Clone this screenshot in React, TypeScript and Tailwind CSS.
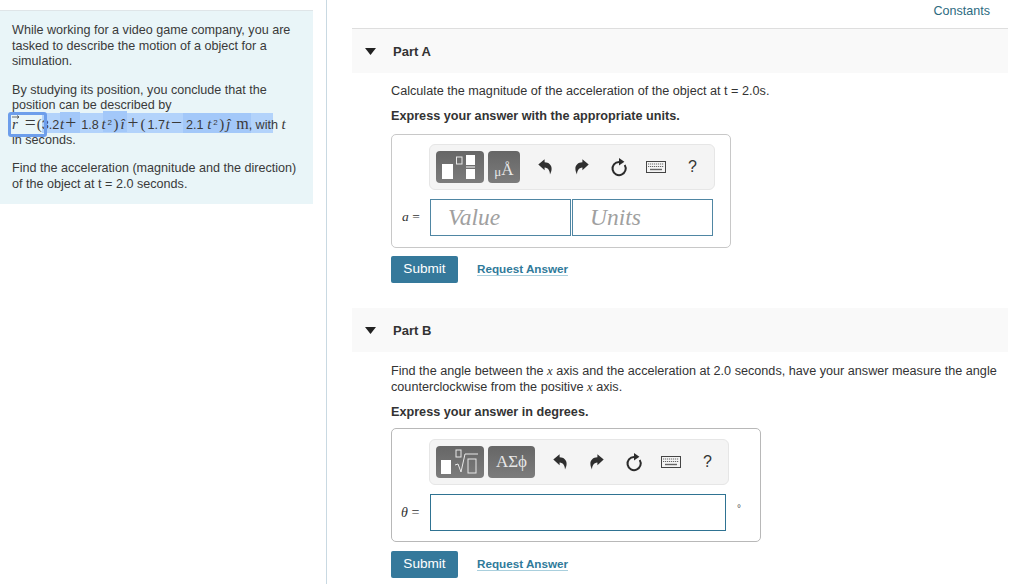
import React from 'react';

const sans = { fontFamily: '"Liberation Sans", Arial, sans-serif' };

function UndoIcon({ flip }: { flip?: boolean }) {
  return (
    <svg width="14" height="16" viewBox="0 0 14 16" className={flip ? '-scale-x-100' : ''}>
      <path d="M0.3 5.6 L6.6 0.3 L6.6 3.2 C10.8 3.2 13.8 6 13.6 10 C13.5 12 12.9 13.7 12 15.4 C11.8 12 10.4 8.8 6.6 8.6 L6.6 11.2 Z" fill="#2f2f2f" />
    </svg>
  );
}

function ResetIcon() {
  return (
    <svg width="18" height="19" viewBox="0 0 18 19">
      <path d="M9 3.9 A6.6 6.6 0 1 0 14.7 7" fill="none" stroke="#2b2b2b" strokeWidth="2" />
      <path d="M9 0 L9 7.6 L14.4 3.8 Z" fill="#2b2b2b" />
    </svg>
  );
}

function KeyboardIcon() {
  return (
    <svg width="20" height="12" viewBox="0 0 20 12">
      <rect x="0.5" y="0.5" width="19" height="11" fill="#f4f4f4" stroke="#444" />
      <path d="M2 3 H18 M2 5.5 H18" stroke="#666" strokeWidth="1.2" strokeDasharray="1.2 0.8" />
      <path d="M4 8.5 H16" stroke="#666" strokeWidth="1.4" />
    </svg>
  );
}

function FractionGlyph() {
  return (
    <svg width="36" height="26" viewBox="0 0 36 26">
      <rect x="0" y="10" width="11" height="15" fill="#fff" />
      <rect x="14.5" y="3" width="5.5" height="7" fill="none" stroke="#e8e8e8" />
      <rect x="24" y="1" width="9" height="10" fill="#fff" />
      <rect x="24" y="12.5" width="9" height="1" fill="#fff" />
      <rect x="24" y="15" width="9" height="10" fill="#fff" />
    </svg>
  );
}

function RootGlyph() {
  return (
    <svg width="38" height="26" viewBox="0 0 38 26">
      <rect x="0" y="11" width="10" height="14" fill="#fff" />
      <rect x="15" y="1" width="5" height="7" fill="none" stroke="#e8e8e8" />
      <path d="M14 16 L17 15 L20 23 L24 5 L37 5" fill="none" stroke="#e8e8e8" strokeWidth="1" />
      <rect x="27" y="10" width="8" height="14" fill="none" stroke="#e8e8e8" />
    </svg>
  );
}

function Toolbar({ wide, offset }: { wide: number; offset: boolean }) {
  const slot = 'w-[37px] flex items-center justify-center';
  return (
    <div
      className="h-[46px] bg-[#f4f4f4] border border-[#e6e6e6] rounded-[6px] flex items-center pl-[6px]"
      style={{ width: wide }}
    >
      <div className="w-[48px] h-[32px] rounded-[4px] bg-gradient-to-b from-[#666666] to-[#7c7c7c] flex items-center justify-center">
        {offset ? <RootGlyph /> : <FractionGlyph />}
      </div>
      {offset ? (
        <div className="ml-[4px] w-[47px] h-[32px] rounded-[4px] bg-gradient-to-b from-[#666666] to-[#7c7c7c] flex items-center justify-center text-[#e8e8e8] text-[17px] font-['Liberation_Serif',serif]">
          ΑΣϕ
        </div>
      ) : (
        <div className="ml-[4px] w-[32px] h-[32px] rounded-[4px] bg-gradient-to-b from-[#666666] to-[#7c7c7c] flex items-end justify-center pb-[5px] text-[#e8e8e8] leading-none font-['Liberation_Serif',serif]">
          <span className="text-[13px]">μ</span>
          <span className="text-[17px]">Å</span>
        </div>
      )}
      <div className="ml-[6px] flex items-center">
        <div className={slot}><UndoIcon /></div>
        <div className={slot}><UndoIcon flip /></div>
        <div className={slot}><ResetIcon /></div>
        <div className={slot}><KeyboardIcon /></div>
        <div className={`${slot} text-[16px] text-[#333]`}>?</div>
      </div>
    </div>
  );
}

function Actions() {
  return (
    <div className="flex items-center mt-[8px]">
      <button className="w-[67px] h-[27px] rounded-[2px] bg-[#35799b] text-white text-[13.6px]">Submit</button>
      <a className="ml-[19px] text-[11.7px] font-bold text-[#2f7a9a] border-b border-[#a9cfdd] leading-[12px] -mt-[1px]">Request Answer</a>
    </div>
  );
}

function PartHeader({ label }: { label: string }) {
  return (
    <div className="h-[44px] bg-[#f9f9f9] flex items-center pl-[13px]">
      <svg width="11" height="7" viewBox="0 0 11 7">
        <path d="M0 0 H11 L5.5 7 Z" fill="#222" />
      </svg>
      <span className="ml-[17px] mt-[1px] text-[13px] font-bold text-[#333]">{label}</span>
    </div>
  );
}

const mathOp = "font-['Liberation_Serif',serif] text-[19.5px]";
const mathSerif = "font-['Liberation_Serif',serif] text-[15px]";
const mathVar = "font-['Liberation_Serif',serif] italic text-[15px]";

export default function App() {
  return (
    <div className="w-[1024px] h-[584px] overflow-hidden bg-white flex text-[#333]" style={sans}>
      {/* problem statement */}
      <aside className="w-[327px] shrink-0 h-full border-r border-[#c9d9e2] pt-[10px]">
        <div className="w-[313px] h-[194px] bg-[#e9f5f8] border-t border-[#dfe5e8] pl-[12px] pt-[12px] text-[12.6px] leading-[15.5px] text-[#3a3a3a]">
          <p>
            While working for a video game company, you are
            <br />
            tasked to describe the motion of a object for a
            <br />
            simulation.
          </p>
          <p className="mt-[13px]">
            By studying its position, you conclude that the
            <br />
            position can be described by
          </p>
          <p className="relative whitespace-nowrap h-[19px] leading-[18px]">
            {/* browser selection left over the formula */}
            <span className="absolute left-[30px] -top-[1px] w-[231px] h-[20px] bg-[#b3d3fb]" />
            <span className="absolute left-[48px] -top-[2px] w-[20px] h-[21px] bg-[#a3c8f9]" />
            <span className="absolute left-[91px] -top-[3px] w-[24px] h-[21px] bg-[#a3c8f9]" />
            <span className="absolute left-[171px] -top-[1px] w-[68px] h-[20px] bg-[#a3c8f9]" />
            <span className="relative">
              <span className={`${mathVar} relative`}>
                r
                <svg width="8" height="4" viewBox="0 0 8 4" className="absolute left-0 -top-[1px]">
                  <path d="M0 2 H7 M5 0.5 L7 2 L5 3.5" fill="none" stroke="#444" strokeWidth="0.8" />
                </svg>
              </span>
              <span className={`${mathOp} ml-[7px]`}>=</span>
              <span className={`${mathSerif} ml-[1px]`}>(</span>
              3.2
              <span className={`${mathVar} ml-[0.6px]`}>t</span>
              <span className={`${mathOp} ml-[1.2px]`}>+</span>
              <span className="ml-[5px]">1.8</span>
              <span className={`${mathVar} ml-[2.6px]`}>t</span>
              <sup className="text-[8px] ml-[1.8px]">2</sup>
              <span className={`${mathSerif} ml-[1.6px]`}>)</span>
              <span className={`${mathVar} ml-[2px]`}>î</span>
              <span className={`${mathOp} ml-[2.8px]`}>+</span>
              <span className={`${mathSerif} ml-[2px]`}>(</span>
              <span className="ml-[2px]">1.7</span>
              <span className={`${mathVar} ml-[0.6px]`}>t</span>
              <span className={`${mathOp} ml-[1.4px]`}>−</span>
              <span className="ml-[4px]">2.1</span>
              <span className={`${mathVar} ml-[3.6px]`}>t</span>
              <sup className="text-[8px] ml-[1.8px]">2</sup>
              <span className={`${mathSerif} ml-[1.6px]`}>)</span>
              <span className={`${mathVar} ml-[2px]`}>ĵ</span>
              <span className="font-['Liberation_Serif',serif] text-[16px] ml-[5.8px]">m</span>, with{' '}
              <span className={mathVar}>t</span>
            </span>
            <span className="absolute -left-[4px] -top-[2px] w-[39px] h-[25px] border-[3px] border-[#6d9eeb] rounded-[3px]" />
          </p>
          <p>in seconds.</p>
          <p className="mt-[13px]">
            Find the acceleration (magnitude and the direction)
            <br />
            of the object at t = 2.0 seconds.
          </p>
        </div>
      </aside>

      {/* parts */}
      <main className="flex-1 pl-[25px] pr-[16px]">
        <div className="h-[29px] border-b border-[#dedede] flex justify-end pr-[18px] pt-[4px]">
          <a className="text-[12.55px] text-[#2c6a80] leading-[15px]">Constants</a>
        </div>

        <PartHeader label="Part A" />
        <section className="pl-[39px]">
          <p className="mt-[11px] text-[12.65px] leading-[15px]">Calculate the magnitude of the acceleration of the object at t = 2.0s.</p>
          <p className="mt-[10px] text-[12.65px] leading-[15px] font-bold">Express your answer with the appropriate units.</p>
          <div className="mt-[10px] w-[340px] h-[114px] border border-[#c8c8c8] rounded-[5px] pt-[9px] pl-[37px]">
            <Toolbar wide={286} offset={false} />
            <div className="flex items-center mt-[8px] h-[38px] relative">
              <span className="absolute -left-[27px] text-[13.5px] font-['Liberation_Serif',serif]">
                <i>a</i> =
              </span>
              <input
                readOnly
                placeholder="Value"
                className="ml-[1px] w-[141px] h-[37px] border border-[#4f86a3] pl-[17px] text-[23.5px] italic font-['Liberation_Serif',serif] placeholder:text-[#a0a0a0] outline-none"
              />
              <input
                readOnly
                placeholder="Units"
                className="ml-[1px] w-[141px] h-[37px] border border-[#4f86a3] pl-[17px] text-[23.5px] italic font-['Liberation_Serif',serif] placeholder:text-[#a0a0a0] outline-none"
              />
            </div>
          </div>
          <Actions />
        </section>

        <div className="mt-[25px]">
          <PartHeader label="Part B" />
        </div>
        <section className="pl-[39px]">
          <p className="mt-[11px] text-[12.65px] leading-[16px] whitespace-nowrap">
            Find the angle between the <i className="font-['Liberation_Serif',serif]">x</i> axis and the acceleration at 2.0 seconds, have your answer measure the angle
            <br />
            counterclockwise from the positive <i className="font-['Liberation_Serif',serif]">x</i> axis.
          </p>
          <p className="mt-[10px] text-[12.65px] leading-[15px] font-bold">Express your answer in degrees.</p>
          <div className="mt-[8px] w-[370px] h-[114px] border border-[#b8b8b8] rounded-[5px] pt-[10px] pl-[37px]">
            <Toolbar wide={300} offset />
            <div className="flex items-center mt-[8px] h-[38px] relative">
              <span className="absolute -left-[28px] text-[14px] font-['Liberation_Serif',serif]">
                <i>θ</i> =
              </span>
              <input readOnly className="ml-[1px] w-[296px] h-[37px] border border-[#2f7392] outline-none" />
              <span className="ml-[11px] -mt-[8px] text-[10px] text-[#555]">°</span>
            </div>
          </div>
          <div className="pt-[1px]">
            <Actions />
          </div>
        </section>
      </main>
    </div>
  );
}
